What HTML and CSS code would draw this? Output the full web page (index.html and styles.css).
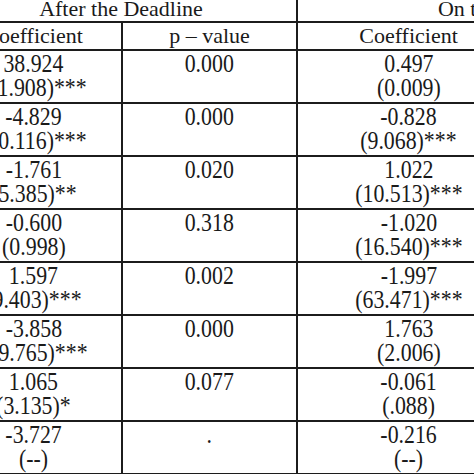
FILE: index.html
```html
<!DOCTYPE html>
<html>
<head>
<meta charset="utf-8">
<link rel="stylesheet" href="styles.css">
</head>
<body>
<div class="frame">
<table class="results">
  <colgroup>
    <col class="c1"><col class="c2"><col class="c3"><col class="c4">
  </colgroup>
  <thead>
    <tr class="group">
      <th colspan="2" class="left-group">After the Deadline</th>
      <th colspan="2">On the Deadline</th>
    </tr>
    <tr class="sub">
      <th>Coefficient</th>
      <th>p – value</th>
      <th>Coefficient</th>
      <th>p – value</th>
    </tr>
  </thead>
  <tbody>
    <tr><td><span class="v">38.924<br>(11.908)***</span></td><td><span class="v">0.000<br>&nbsp;</span></td><td><span class="v">0.497<br>(0.009)</span></td><td></td></tr>
    <tr><td><span class="v">-4.829<br>(10.116)***</span></td><td><span class="v">0.000<br>&nbsp;</span></td><td><span class="v">-0.828<br>(9.068)***</span></td><td></td></tr>
    <tr><td><span class="v">-1.761<br>(5.385)**</span></td><td><span class="v">0.020<br>&nbsp;</span></td><td><span class="v">1.022<br>(10.513)***</span></td><td></td></tr>
    <tr><td><span class="v">-0.600<br>(0.998)</span></td><td><span class="v">0.318<br>&nbsp;</span></td><td><span class="v">-1.020<br>(16.540)***</span></td><td></td></tr>
    <tr><td><span class="v">1.597<br>(9.403)***</span></td><td><span class="v">0.002<br>&nbsp;</span></td><td><span class="v">-1.997<br>(63.471)***</span></td><td></td></tr>
    <tr><td><span class="v">-3.858<br>(19.765)***</span></td><td><span class="v">0.000<br>&nbsp;</span></td><td><span class="v">1.763<br>(2.006)</span></td><td></td></tr>
    <tr><td><span class="v">1.065<br>(3.135)*</span></td><td><span class="v">0.077<br>&nbsp;</span></td><td><span class="v">-0.061<br>(.088)</span></td><td></td></tr>
    <tr><td><span class="v">-3.727<br>(--)</span></td><td><span class="v">.<br>&nbsp;</span></td><td><span class="v">-0.216<br>(--)</span></td><td></td></tr>
  </tbody>
</table>
</div>
</body>
</html>
```

FILE: styles.css
```css
html, body {
  margin: 0;
  padding: 0;
  background: #ffffff;
  overflow: hidden;
}
.frame {
  width: 474px;
  height: 474px;
  overflow: hidden;
}
.results {
  margin-top: -3px;
  margin-left: -54px;
  width: 777px;
  table-layout: fixed;
  border-collapse: collapse;
  font-family: "Liberation Serif", "Times New Roman", serif;
  line-height: 24px;
  color: #1a1a1a;
}
.c1 { width: 176px; }
.c2 { width: 175px; }
.c3 { width: 223px; }
.c4 { width: 203px; }
.results th,
.results td {
  text-align: center;
  font-weight: normal;
  white-space: nowrap;
  border: 2px solid #1c1c1c;
  padding: 0;
  vertical-align: top;
}
.results th { font-size: 22px; }
.results td { font-size: 26px; padding: 1px 0 2px 0; }
.v {
  display: inline-block;
  vertical-align: top;
  transform: scaleX(0.84);
}
.results tr > :first-child { border-left: none; }
.results tr.group th { border-top: none; border-left: 2px solid #1c1c1c; padding: 0; }
.results tr.group th.left-group { border-left: none; border-right: 2px solid #1c1c1c; }
.results tr.sub th { padding: 1px 0 1px 0; }
```
